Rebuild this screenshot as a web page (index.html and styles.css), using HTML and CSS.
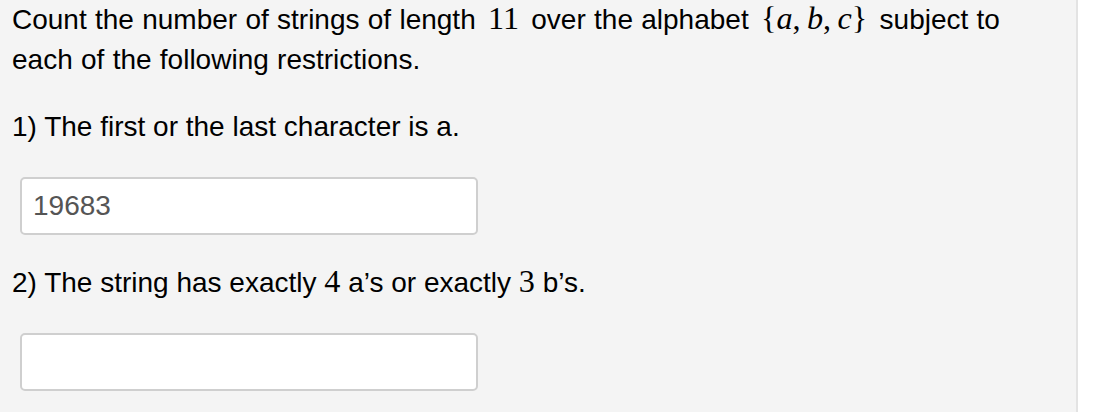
FILE: index.html
```html
<!DOCTYPE html>
<html>
<head>
<meta charset="utf-8">
<link rel="stylesheet" href="styles.css">
</head>
<body>
<div class="panel">
  <p class="intro">Count the number of strings of length <span class="math">11</span> over the alphabet <span class="math">{<i>a</i>,<span class="thin"></span><i>b</i>,<span class="thin"></span><i>c</i>}</span> subject to each of the following restrictions.</p>
  <p class="q q1">1) The first or the last character is a.</p>
  <div class="answer"><input class="field" type="text" value="19683"></div>
  <p class="q q2">2) The string has exactly <span class="math">4</span> a’s or exactly <span class="math">3</span> b’s.</p>
  <div class="answer"><input class="field" type="text" value=""></div>
</div>
</body>
</html>
```
FILE: styles.css
```css
html, body {
  margin: 0;
  padding: 0;
  background: #ffffff;
}
.panel {
  box-sizing: border-box;
  width: 1078px;
  height: 412px;
  background: #f4f4f4;
  border-right: 2px solid #e3e3e3;
  padding: 0 0 0 12px;
  font-family: "Liberation Sans", Arial, Helvetica, sans-serif;
  font-size: 28px;
  line-height: 40px;
  color: #000;
  overflow: hidden;
}
p {
  margin: 0;
}
.intro {
  width: 1010px;
  word-spacing: 0.5px;
}
.q1 {
  margin-top: 27px;
}
.q2 {
  margin-top: 28px;
}
.math {
  font-family: "Liberation Serif", "Times New Roman", serif;
  font-size: 1.15em;
  line-height: 1;
}
.intro .math {
  margin: 0 4px;
}
.math i {
  font-style: italic;
}
.thin {
  display: inline-block;
  width: 0.2em;
}
.answer {
  margin-top: 30px;
  margin-left: 8px;
  display: flex;
}
.field {
  box-sizing: border-box;
  width: 458px;
  height: 58px;
  border: 2px solid #cfcfcf;
  border-radius: 5px;
  background: #ffffff;
  padding: 0 11px;
  font-family: "Liberation Sans", Arial, Helvetica, sans-serif;
  font-size: 28px;
  color: #555555;
  outline: none;
}
```
